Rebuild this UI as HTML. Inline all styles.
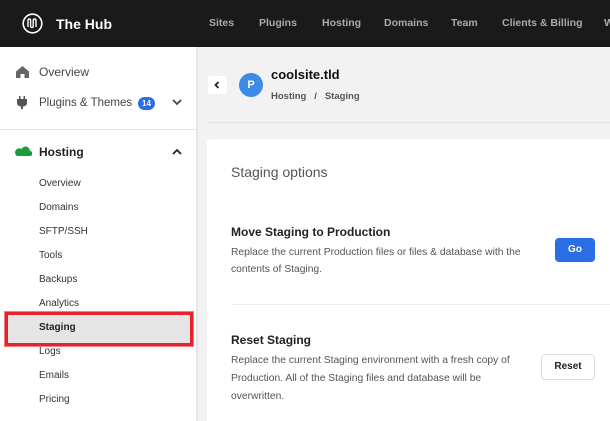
<!DOCTYPE html>
<html><head><style>
*{margin:0;padding:0;box-sizing:border-box}
html,body{width:610px;height:421px;overflow:hidden}
body{font-family:"Liberation Sans",Arial,sans-serif;background:#f2f2f2;position:relative}
.top{position:absolute;left:0;top:0;width:610px;height:47px;background:#1a1a1a}
.top .nav{position:absolute;top:17px;font-size:10.5px;font-weight:bold;color:#aaa;white-space:nowrap}
.side{position:absolute;left:0;top:47px;width:198px;height:374px;background:#fff;border-right:2px solid #e6e6e6}
.abs{position:absolute;white-space:nowrap}
.sub{position:absolute;left:39px;font-size:10px;color:#333}
.card{position:absolute;left:207px;top:139px;width:403px;height:282px;background:#fff;border-radius:4px 0 0 0}
</style></head><body>
<div class="top">
  <svg class="abs" style="left:22px;top:13px" width="21" height="21" viewBox="0 0 21 21"><circle cx="10.5" cy="10.5" r="9.3" fill="none" stroke="#fff" stroke-width="1.6"/><path d="M6 14V7.5q0-1.5 1.3-1.5t1.3 1.5V13q0 1.5 1.3 1.5t1.3-1.5V7.5q0-1.5 1.3-1.5T14 7.5V14" fill="none" stroke="#fff" stroke-width="1.4"/></svg>
  <div class="abs" style="left:56px;top:16px;color:#fff;font-weight:bold;font-size:14px">The Hub</div>
  <div class="nav" style="left:209px">Sites</div>
  <div class="nav" style="left:259px">Plugins</div>
  <div class="nav" style="left:322px">Hosting</div>
  <div class="nav" style="left:384px">Domains</div>
  <div class="nav" style="left:451px">Team</div>
  <div class="nav" style="left:502px">Clients &amp; Billing</div>
  <div class="nav" style="left:604px">W</div>
</div>
<div class="side">
  <svg class="abs" style="left:16px;top:19px" width="13" height="12" viewBox="0 0 13 12"><path d="M6.5 0L0 5.5V12h4.5V8h4v4H13V5.5z" fill="#666"/></svg>
  <div class="abs" style="left:39px;top:18px;font-size:12px;color:#444">Overview</div>
  <svg class="abs" style="left:17px;top:49px" width="10" height="13" viewBox="0 0 10 13"><path d="M2 0h1.5v3h3V0H8v3h2v4q0 3-4 3.5V13H4v-2.5Q0 10 0 7V3h2z" fill="#555"/></svg>
  <div class="abs" style="left:39px;top:50px;font-size:11.5px;color:#444">Plugins &amp; Themes</div>
  <div class="abs" style="left:138px;top:50px;width:17px;height:13px;border-radius:7px;background:#2a6ee6;color:#fff;font-size:8px;font-weight:bold;text-align:center;line-height:13px">14</div>
  <svg class="abs" style="left:172px;top:52px" width="10" height="7" viewBox="0 0 10 7"><path d="M1 1l4 4 4-4" fill="none" stroke="#444" stroke-width="1.8"/></svg>
  <div class="abs" style="left:0;top:82px;width:198px;height:1px;background:#e6e6e6"></div>
  <svg class="abs" style="left:15px;top:99px" width="17" height="10" viewBox="0 0 17 10"><path d="M2 10h13a2.5 2.5 0 0 0 0-5 4.5 4.5 0 0 0-8.5-2A3.5 3.5 0 0 0 2 10z" fill="#1a9c3e"/></svg>
  <div class="abs" style="left:39px;top:98px;font-size:12px;font-weight:bold;color:#222">Hosting</div>
  <svg class="abs" style="left:172px;top:101px" width="10" height="7" viewBox="0 0 10 7"><path d="M1 6l4-4 4 4" fill="none" stroke="#222" stroke-width="1.8"/></svg>
  <div class="sub" style="top:131px">Overview</div>
  <div class="sub" style="top:155px">Domains</div>
  <div class="sub" style="top:179px">SFTP/SSH</div>
  <div class="sub" style="top:203px">Tools</div>
  <div class="sub" style="top:227px">Backups</div>
  <div class="sub" style="top:251px">Analytics</div>
  <div class="abs" style="left:5px;top:265px;width:188px;height:34px;border:3px solid #e8212b;background:#e5e5e5;outline:1px solid #f08080"></div>
  <div class="sub" style="top:275px;font-weight:bold;color:#222">Staging</div>
  <div class="sub" style="top:299px">Logs</div>
  <div class="sub" style="top:323px">Emails</div>
  <div class="sub" style="top:347px">Pricing</div>
</div>
<div class="abs" style="left:208px;top:76px;width:19px;height:18px;background:#fff;border-radius:3px"></div>
<svg class="abs" style="left:214px;top:81px" width="6" height="8" viewBox="0 0 6 8"><path d="M4.5 1L1.5 4l3 3" fill="none" stroke="#222" stroke-width="1.8"/></svg>
<div class="abs" style="left:239px;top:73px;width:24px;height:24px;border-radius:50%;background:#3d8ae8;color:#fff;font-weight:bold;font-size:11px;text-align:center;line-height:24px">P</div>
<div class="abs" style="left:271px;top:67px;font-size:13px;font-weight:bold;color:#111">coolsite.tld</div>
<div class="abs" style="left:271px;top:91px;font-size:9.5px;font-weight:bold;color:#555">Hosting &nbsp;&nbsp;/&nbsp;&nbsp; Staging</div>
<div class="abs" style="left:207px;top:122px;width:403px;height:1px;background:#e2e2e2"></div>
<div class="card"></div>
<div class="abs" style="left:231px;top:164px;font-size:14px;color:#555">Staging options</div>
<div class="abs" style="left:231px;top:225px;font-size:12px;font-weight:bold;color:#222">Move Staging to Production</div>
<div class="abs" style="left:231px;top:244px;font-size:10.3px;color:#555;line-height:17px">Replace the current Production files or files &amp; database with the<br>contents of Staging.</div>
<div class="abs" style="left:555px;top:238px;width:40px;height:24px;border-radius:4px;background:#2a6ee6;color:#fff;font-size:10px;font-weight:bold;text-align:center;line-height:24px">Go</div>
<div class="abs" style="left:231px;top:304px;width:379px;height:1px;background:#ececec"></div>
<div class="abs" style="left:231px;top:333px;font-size:12px;font-weight:bold;color:#222">Reset Staging</div>
<div class="abs" style="left:231px;top:352px;font-size:10.3px;color:#555;line-height:18px">Replace the current Staging environment with a fresh copy of<br>Production. All of the Staging files and database will be<br>overwritten.</div>
<div class="abs" style="left:541px;top:354px;width:54px;height:26px;border-radius:4px;border:1px solid #ddd;background:#fff;color:#222;font-size:10px;font-weight:bold;text-align:center;line-height:24px">Reset</div>
</body></html>
